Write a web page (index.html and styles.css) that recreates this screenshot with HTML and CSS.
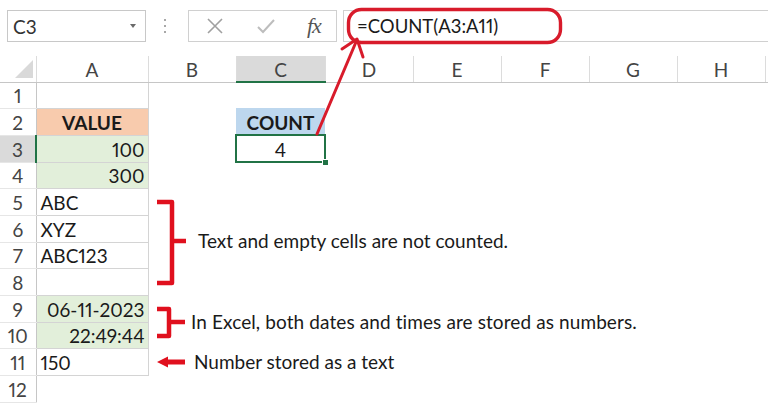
FILE: index.html
```html
<!DOCTYPE html>
<html lang="en">
<head>
  <meta charset="UTF-8">
  <meta name="viewport" content="width=device-width, initial-scale=1.0">
  <title>COUNT function</title>
  <link rel="stylesheet" href="styles.css">
</head>
<body>
  <div class="toolbar">
    <div class="name-box">
      <span>C3</span>
      <span class="caret"></span>
    </div>
    <div class="dots"><i></i><i></i><i></i></div>
    <div class="fx-buttons">
      <svg class="btn-icon" width="18" height="18" viewBox="0 0 18 18">
        <path d="M2 2 L16 16 M16 2 L2 16" stroke="#a0a0a0" stroke-width="1.6" fill="none"/>
      </svg>
      <svg class="btn-icon" width="20" height="18" viewBox="0 0 20 18">
        <path d="M2 10 L7 15 L18 3" stroke="#bdbdbd" stroke-width="2" fill="none"/>
      </svg>
      <span class="fx">fx</span>
    </div>
    <div class="formula">=COUNT(A3:A11)</div>
  </div>

  <div class="sheet">
    <table class="grid">
      <colgroup>
        <col class="col-head">
        <col class="col-a">
        <col class="col-std">
        <col class="col-c">
        <col class="col-std">
        <col class="col-std">
        <col class="col-std">
        <col class="col-std">
        <col class="col-std">
        <col class="col-rest">
      </colgroup>
      <thead>
        <tr class="h26">
          <th class="corner"><span class="corner-mark"></span></th>
          <th>A</th><th>B</th><th class="active">C</th><th>D</th><th>E</th><th>F</th><th>G</th><th>H</th><th class="rest"></th>
        </tr>
      </thead>
      <tbody>
        <tr class="h26"><th>1</th><td class="a"></td><td></td><td></td><td></td><td></td><td></td><td></td><td></td><td></td></tr>
        <tr class="h27"><th>2</th><td class="a head-peach">VALUE</td><td></td><td class="head-blue">COUNT</td><td></td><td></td><td></td><td></td><td></td><td></td></tr>
        <tr class="h27"><th class="active">3</th><td class="a num green">100</td><td></td><td class="sel">4<span class="handle"></span></td><td></td><td></td><td></td><td></td><td></td><td></td></tr>
        <tr class="h26"><th>4</th><td class="a num green">300</td><td></td><td></td><td></td><td></td><td></td><td></td><td></td><td></td></tr>
        <tr class="h27"><th>5</th><td class="a">ABC</td><td></td><td></td><td></td><td></td><td></td><td></td><td></td><td></td></tr>
        <tr class="h27"><th>6</th><td class="a">XYZ</td><td></td><td></td><td></td><td></td><td></td><td></td><td></td><td></td></tr>
        <tr class="h26"><th>7</th><td class="a">ABC123</td><td></td><td></td><td></td><td></td><td></td><td></td><td></td><td></td></tr>
        <tr class="h27"><th>8</th><td class="a"></td><td></td><td></td><td></td><td></td><td></td><td></td><td></td><td></td></tr>
        <tr class="h27"><th>9</th><td class="a num green">06-11-2023</td><td></td><td></td><td></td><td></td><td></td><td></td><td></td><td></td></tr>
        <tr class="h26"><th>10</th><td class="a num green">22:49:44</td><td></td><td></td><td></td><td></td><td></td><td></td><td></td><td></td></tr>
        <tr class="h27"><th>11</th><td class="a">150</td><td></td><td></td><td></td><td></td><td></td><td></td><td></td><td></td></tr>
        <tr class="h27"><th>12</th><td></td><td></td><td></td><td></td><td></td><td></td><td></td><td></td><td></td></tr>
      </tbody>
    </table>
  </div>

  <!-- annotation layer drawn over the sheet -->
  <svg class="marks" width="768" height="404" viewBox="0 0 768 404">
    <g fill="none" stroke="#d81b2b" stroke-linecap="round" stroke-linejoin="round">
      <rect x="348.5" y="9.5" width="212" height="33" rx="13" stroke-width="3.4"/>
      <path d="M317 134 L356 42" stroke-width="3"/>
      <path d="M342 49 L357 39 L363 57" stroke-width="3"/>
    </g>
    <g fill="none" stroke="#e0101e" stroke-width="4.5" stroke-linejoin="round">
      <path d="M157 202 H172 V283 H157 M172 241 H186"/>
      <path d="M157 309 H169 V336 H157 M169 322 H185"/>
      <path d="M166 362 H185" stroke-width="5"/>
    </g>
    <polygon points="157,362 168,356.5 168,367.5" fill="#e0101e"/>
  </svg>
  <div class="note note-text">Text and empty cells are not counted.</div>
  <div class="note note-date">In Excel, both dates and times are stored as numbers.</div>
  <div class="note note-num">Number stored as a text</div>
</body>
</html>
```

FILE: styles.css
```css
* {
  margin: 0;
  padding: 0;
  box-sizing: border-box;
}

body {
  width: 768px;
  height: 404px;
  background-color: #fff;
  color: #1a1a1a;
  font-family: Lato, 'Liberation Sans', sans-serif;
  font-size: 19px;
  font-variant-numeric: proportional-nums;
  overflow: hidden;
  position: relative;
}

/* formula bar */

.toolbar {
  display: flex;
  align-items: stretch;
  height: 32px;
  margin-top: 10px;
  padding-left: 7px;
}

.name-box {
  width: 139px;
  border: 1px solid #c8c8c8;
  display: flex;
  align-items: center;
  justify-content: space-between;
  padding: 0 9px 0 5px;
  color: #333;
}

.caret {
  width: 0;
  height: 0;
  border-left: 3.5px solid transparent;
  border-right: 3.5px solid transparent;
  border-top: 4px solid #6a6a6a;
}

.dots {
  width: 42px;
  display: flex;
  flex-direction: column;
  align-items: center;
  justify-content: center;
  gap: 4px;
  padding-right: 4px;
}

.dots i {
  width: 2px;
  height: 2px;
  background-color: #a8a8a8;
}

.fx-buttons {
  width: 149px;
  border: 1px solid #d0d0d0;
  display: flex;
  align-items: center;
  padding-left: 17px;
}

.btn-icon:nth-child(2) {
  margin-left: 32px;
}

.fx {
  margin-left: 31px;
  font-family: 'Liberation Serif', serif;
  font-style: italic;
  font-size: 22px;
  color: #555;
  letter-spacing: -1px;
}

.formula {
  flex: 1;
  margin-left: 6px;
  border-top: 1px solid #d0d0d0;
  border-bottom: 1px solid #d0d0d0;
  border-left: 1px solid #d0d0d0;
  display: flex;
  align-items: center;
  padding-left: 13px;
  font-size: 18.5px;
  color: #1a1a1a;
}

/* sheet grid */

.sheet {
  margin-top: 14px;
}

.grid {
  table-layout: fixed;
  border-collapse: collapse;
  width: 768px;
}

.col-head { width: 36px; }
.col-a { width: 112px; }
.col-std { width: 88px; }
.col-c { width: 89px; }
.col-rest { width: 3px; }

.h26 { height: 26px; }
.h27 { height: 27px; }

.grid th {
  font-weight: normal;
  color: #444;
  text-align: center;
  padding: 0;
}

.grid thead th {
  border-bottom: 1px solid #c6c6c6;
  border-left: 1px solid #dcdcdc;
  vertical-align: middle;
  padding-top: 1px;
}

.grid thead th.corner {
  border-left: none;
  position: relative;
}

.corner-mark {
  position: absolute;
  right: 3px;
  bottom: 4px;
  width: 0;
  height: 0;
  border-left: 18px solid transparent;
  border-bottom: 18px solid #d9d9d9;
}

.grid thead th.active {
  background-color: #dadada;
  border-bottom: 2px solid #217346;
}

.grid thead th.rest {
  border-left: 1px solid #dcdcdc;
}

.grid tbody th {
  border-right: 1px solid #c6c6c6;
  border-bottom: 1px solid #e6e6e6;
  vertical-align: bottom;
  padding-bottom: 1px;
}

.grid tbody th.active {
  background-color: #dadada;
  border-right: 2px solid #217346;
}

.grid td {
  padding: 0 4px 1px;
  vertical-align: bottom;
  white-space: nowrap;
}

.grid td.a {
  border-right: 1px solid #d4d4d4;
  border-bottom: 1px solid #d4d4d4;
}

.grid td.num {
  text-align: right;
  padding-right: 3px;
}

.green {
  background-color: #e2efda;
}

.head-peach {
  background-color: #f8cbad;
  font-weight: bold;
  text-align: center;
}

.head-blue {
  background-color: #bdd7ee;
  font-weight: bold;
  text-align: center;
}

.grid td.sel {
  text-align: center;
  position: relative;
}

.sel::after {
  content: '';
  position: absolute;
  top: -1px;
  left: -1px;
  right: -1px;
  bottom: -1px;
  border: 2px solid #217346;
}

.handle {
  position: absolute;
  right: -4px;
  bottom: -4px;
  width: 7px;
  height: 7px;
  background-color: #217346;
  border: 1px solid #fff;
  z-index: 1;
}

/* annotations */

.marks {
  position: absolute;
  top: 0;
  left: 0;
  pointer-events: none;
}

.note {
  position: absolute;
  line-height: 20px;
  color: #1a1a1a;
  white-space: nowrap;
}

.note-text {
  left: 198px;
  top: 231px;
}

.note-date {
  left: 191px;
  top: 312px;
  letter-spacing: 0.1px;
}

.note-num {
  left: 194px;
  top: 352px;
}
```
